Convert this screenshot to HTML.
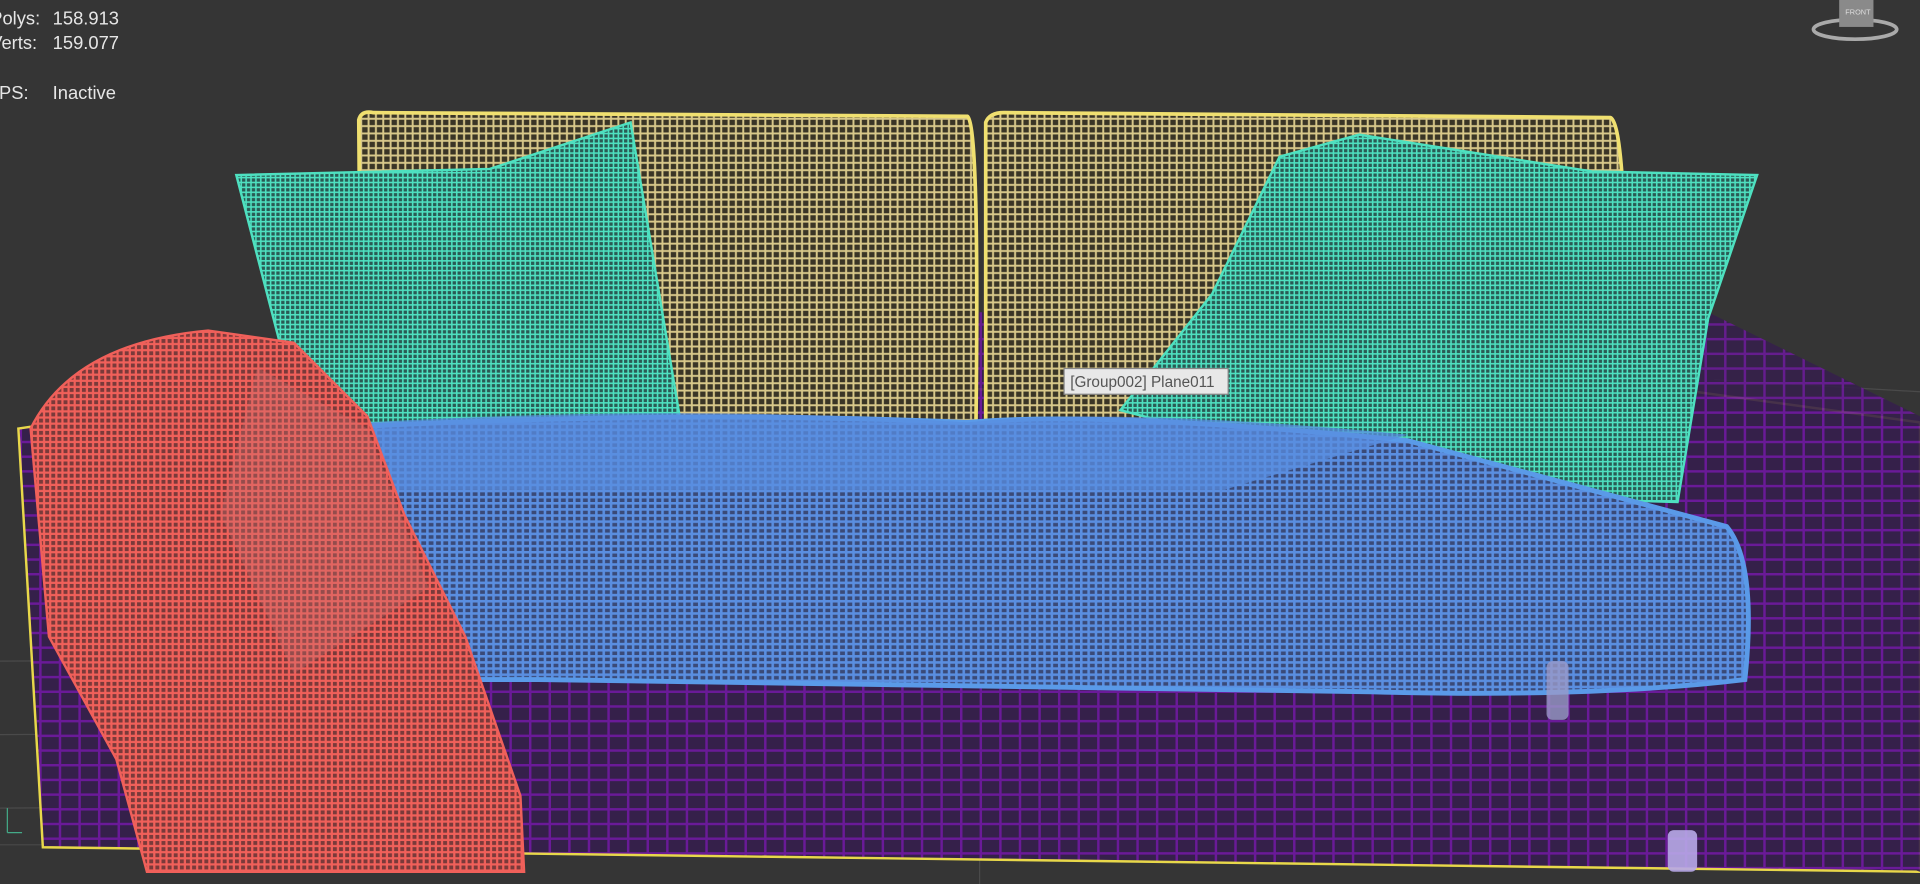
<!DOCTYPE html>
<html><head><meta charset="utf-8"><style>
html,body{margin:0;padding:0;background:#353535;overflow:hidden}
svg{display:block}
text{font-family:"Liberation Sans",sans-serif}
</style></head><body>
<svg width="1920" height="884" viewBox="0 0 1568 722" preserveAspectRatio="none" xmlns="http://www.w3.org/2000/svg">
<defs>
<pattern id="beige" width="6" height="6" patternUnits="userSpaceOnUse"><rect width="6" height="6" fill="#3a3526"/><path d="M0 1H6M1 0V6" stroke="#d8c88a" stroke-width="1.6"/></pattern>
<pattern id="cyan" width="4" height="4" patternUnits="userSpaceOnUse"><rect width="4" height="4" fill="#2a5a54"/><path d="M0 1H4M1 0V4" stroke="#4ee0c0" stroke-width="1.3"/></pattern>
<pattern id="blue" width="6" height="5" patternUnits="userSpaceOnUse"><rect width="6" height="5" fill="#3a4a78"/><path d="M0 1H6M1 0V5" stroke="#5a8ee0" stroke-width="2.2"/></pattern>
<pattern id="purple" width="16" height="12" patternUnits="userSpaceOnUse"><rect width="16" height="12" fill="#35204a"/><path d="M0 1H16M1 0V12" stroke="#6a1a98" stroke-width="2"/></pattern>
<pattern id="red" width="5" height="5" patternUnits="userSpaceOnUse"><rect width="5" height="5" fill="#7a3a3a"/><path d="M0 1H5M1 0V5" stroke="#f0605a" stroke-width="1.8"/></pattern>
</defs>
<rect width="1568" height="722" fill="#353535"/>
<g stroke="#4a4a4a" stroke-width="1">
<path d="M0 540L1568 530M0 600L1568 590M0 660L1568 650M0 690L1568 690M800 530V722M1568 320L1400 310"/>
</g>
<path d="M15 350L230 318L1370 318L1568 345L1568 712L35 692Z" fill="url(#purple)" stroke="#e8d84a" stroke-width="2"/>
<path d="M228 255L1395 255L1568 340L1568 712" fill="url(#purple)" opacity="0.9"/>
<path d="M293 98Q295 90 305 92L790 95Q800 100 797 350L295 350Z" fill="url(#beige)" stroke="#f0e070" stroke-width="3"/>
<path d="M805 100Q808 92 820 92L1315 96Q1330 100 1328 350L805 350Z" fill="url(#beige)" stroke="#f0e070" stroke-width="3"/>
<path d="M193 143L400 138L515 100L555 340L300 355L235 305Z" fill="url(#cyan)" stroke="#4ee0c0" stroke-width="2"/>
<path d="M1045 128L1110 110L1300 140L1435 143L1395 260L1370 410L1180 405L915 335L990 240Z" fill="url(#cyan)" stroke="#4ee0c0" stroke-width="2"/>
<path d="M300 348Q560 335 790 345Q900 335 1150 360L1410 430Q1435 460 1425 555Q1300 570 1120 565L440 555L300 555Z" fill="url(#blue)" stroke="#5a9ae8" stroke-width="4"/>
<path d="M300 345Q560 330 790 345Q910 332 1150 355L1000 400L300 400Z" fill="#5a8ee0" opacity="0.75"/>
<rect x="1263" y="540" width="18" height="48" rx="5" fill="#9a9ac8" opacity="0.8"/>
<rect x="1362" y="678" width="24" height="34" rx="5" fill="#b8a8e8" opacity="0.9"/>
<path d="M25 350Q60 280 170 270L240 280L300 340L330 420L380 520L425 650L428 712L120 712L95 620L40 520Z" fill="url(#red)" stroke="#f0605a" stroke-width="2"/>
<path d="M210 300L300 350L350 480L240 550L180 420Z" fill="#c87070" opacity="0.35"/>
<rect x="869" y="301" width="134" height="21" fill="#e8e8e8" stroke="#888"/>
<text x="874" y="316" font-size="12.5" fill="#555">[Group002] Plane011</text>
<text x="-8" y="20" font-size="15" fill="#e6e6e6">Polys:</text>
<text x="43" y="20" font-size="15" fill="#e6e6e6">158.913</text>
<text x="-8" y="40" font-size="15" fill="#e6e6e6">Verts:</text>
<text x="43" y="40" font-size="15" fill="#e6e6e6">159.077</text>
<text x="-10" y="81" font-size="15" fill="#e6e6e6">FPS:</text>
<text x="43" y="81" font-size="15" fill="#e6e6e6">Inactive</text>
<ellipse cx="1515" cy="24" rx="34" ry="8" fill="none" stroke="#aaa" stroke-width="3"/>
<rect x="1502" y="0" width="28" height="22" fill="#8a8a8a"/>
<text x="1507" y="12" font-size="6" fill="#ddd">FRONT</text>
<path d="M6 680V660M6 680H18" stroke="#4a8" stroke-width="1"/>
</svg>
</body></html>
